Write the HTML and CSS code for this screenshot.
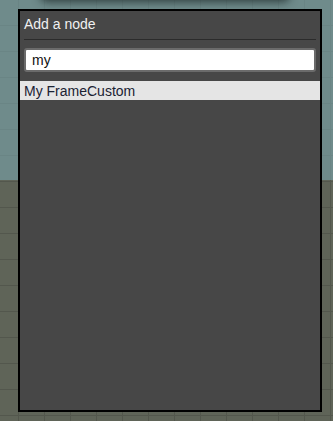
FILE: index.html
```html
<!DOCTYPE html>
<html lang="en">
<head>
    <meta charset="UTF-8">
    <meta name="viewport" content="width=device-width, initial-scale=1.0">
    <title>Add a node</title>
    <link rel="stylesheet" href="styles.css">
</head>
<body>

    <!-- Canvas background -->
    <div class="canvas">
        <div class="canvas-top"></div>
        <div class="canvas-bottom"></div>
    </div>

    <!-- Shadow of the toolbar above -->
    <div class="toolbar-shadow"></div>

    <!-- Add node dialog -->
    <div class="node-dialog">
        <div class="dialog-title">Add a node</div>
        <div class="dialog-rule"></div>
        <input type="text" class="node-search" value="my">
        <div class="node-list">
            <div class="node-item">My FrameCustom</div>
        </div>
    </div>

</body>
</html>
```

FILE: styles.css
```css
body {
    margin: 0;
    font-family: "Liberation Sans", Arial, sans-serif;
    width: 333px;
    height: 421px;
    overflow: hidden;
    position: relative;
}

/* Canvas */
.canvas {
    position: absolute;
    top: 0;
    left: 0;
    width: 333px;
    height: 421px;
    display: flex;
    flex-direction: column;
    z-index: 0;
}

.canvas-top {
    height: 180px;
    background-color: #6f8b8b;
    background-image:
        linear-gradient(#6a8585 1px, transparent 1px),
        linear-gradient(90deg, #6a8585 1px, transparent 1px);
    background-size: 26px 26px;
    background-position: 18px 25px;
}

.canvas-bottom {
    flex: 1;
    background-color: #5f6458;
    background-image:
        linear-gradient(#53574d 1px, transparent 1px),
        linear-gradient(90deg, #53574d 1px, transparent 1px);
    background-size: 26px 26px;
    background-position: 18px 1px;
}

/* Toolbar shadow at the very top */
.toolbar-shadow {
    position: absolute;
    top: -14px;
    left: 40px;
    width: 250px;
    height: 14px;
    border-radius: 8px;
    box-shadow: 0 2px 8px rgba(20, 30, 30, 0.7);
    background-color: #55696a;
    z-index: 1;
}

/* Dialog */
.node-dialog {
    position: relative;
    z-index: 2;
    margin: 9px 0 0 18px;
    width: 300px;
    height: 399px;
    border: 2px solid #000;
    background-color: #474747;
    display: flex;
    flex-direction: column;
}

.dialog-title {
    color: #f0f0f0;
    font-size: 14px;
    line-height: 16px;
    padding: 5px 4px 0 4px;
}

.dialog-rule {
    height: 1px;
    background-color: #2b2b2b;
    margin: 7px 4px 0 4px;
}

.node-search {
    margin: 8px 4px 0 4px;
    height: 24px;
    box-sizing: border-box;
    border: 2px solid #6b6b6b;
    border-radius: 3px;
    background-color: #fff;
    padding: 0 6px;
    font-family: "Liberation Sans", Arial, sans-serif;
    font-size: 14px;
    color: #111;
    outline: none;
}

.node-list {
    margin-top: 9px;
}

.node-item {
    background-color: #e5e5e5;
    color: #1b2233;
    font-size: 14px;
    line-height: 20px;
    height: 19px;
    padding-left: 4px;
    overflow: hidden;
}
```
